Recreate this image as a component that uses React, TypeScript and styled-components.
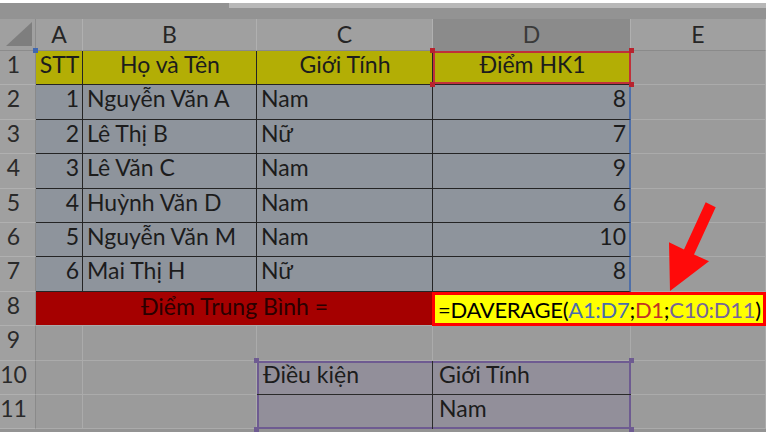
import React from "react";
import styled, { createGlobalStyle } from "styled-components";

const GlobalStyle = createGlobalStyle`
  html, body { margin: 0; padding: 0; background: #ffffff; }
  body { font-family: Lato, "Noto Sans", sans-serif; }
`;

const Page = styled.div`
  position: relative;
  width: 768px;
  height: 432px;
  box-sizing: border-box;
  padding: 3px 2px 0 0;
  background: #ffffff;
  overflow: hidden;
`;

const Window = styled.div`
  height: 100%;
  display: flex;
  flex-direction: column;
  background: #939393;
`;

const TopBand = styled.div`
  flex: none;
  height: 16px;
  display: flex;
  align-items: flex-start;
`;

const FormulaEdge = styled.div`
  margin-left: 229px;
  flex: 1;
  height: 5px;
  background: #b8b8b8;
`;

const Sheet = styled.div`
  display: grid;
  grid-template-columns: 36px 47px 174px 176px 198px 135px;
  grid-template-rows: 32px repeat(11, 34.4px);
  background: #9b9b9b;
  font-size: 23px;
  line-height: 27px;
  color: #1c1c1c;
`;

const Corner = styled.div`
  position: relative;
  background: #a0a0a0;
  border-right: 1px solid #8c8c8c;
  border-bottom: 1px solid #8c8c8c;
  box-sizing: border-box;
  &::after {
    content: "";
    position: absolute;
    right: 3px;
    bottom: 4px;
    width: 0;
    height: 0;
    border-left: 26px solid transparent;
    border-bottom: 24px solid #7e7e7e;
  }
`;

const ColHeader = styled.div<{ $selected?: boolean }>`
  display: flex;
  justify-content: center;
  align-items: flex-start;
  padding-top: 2px;
  box-sizing: border-box;
  background: ${(p) => (p.$selected ? "#8b8b8b" : "#a0a0a0")};
  border-right: 1px solid #b0b0b0;
  border-bottom: 1px solid #8a8a8a;
  color: ${(p) => (p.$selected ? "#3a3a3a" : "#262626")};
`;

const RowHeader = styled.div`
  display: flex;
  justify-content: center;
  align-items: flex-start;
  padding-right: 8px;
  box-sizing: border-box;
  background: #a0a0a0;
  border-right: 1px solid #8a8a8a;
  border-bottom: 1px solid #b0b0b0;
  color: #2a2a2a;
`;

const EmptyCell = styled.div`
  box-sizing: border-box;
  background: #9b9b9b;
  border-right: 1px solid #ababab;
  border-bottom: 1px solid #ababab;
`;

const DataTable = styled.div`
  grid-column: 2 / 6;
  grid-row: 2 / 9;
  display: grid;
  grid-template-columns: 47px 174px 176px 198px;
  grid-template-rows: repeat(7, 34.4px);
  position: relative;
  border-bottom: 1px solid #55709c;
`;

const TCell = styled.div<{ $head?: boolean; $align?: "left" | "right" | "center"; $last?: boolean }>`
  position: relative;
  display: flex;
  align-items: flex-start;
  justify-content: ${(p) =>
    p.$align === "right" ? "flex-end" : p.$align === "center" ? "center" : "flex-start"};
  padding: 0 3px 0 4px;
  box-sizing: border-box;
  white-space: nowrap;
  background: ${(p) => (p.$head ? "#b3ae05" : "#8e949c")};
  border-right: ${(p) => (p.$last ? "2px solid #4f6fa8" : "1.5px solid #242424")};
  border-bottom: 1.5px solid #242424;
`;

const SelectedCell = styled(TCell)`
  border-right: none;
  box-shadow: inset 0 0 0 2px #c0303a;
`;

const Handle = styled.span<{ $c: string; $x: "l" | "r"; $y: "t" | "b" }>`
  position: absolute;
  width: 5px;
  height: 5px;
  background: ${(p) => p.$c};
  ${(p) => (p.$x === "l" ? "left: -3px;" : "right: -3px;")}
  ${(p) => (p.$y === "t" ? "top: -3px;" : "bottom: -3px;")}
  z-index: 2;
`;

const AverageLabel = styled.div`
  grid-column: 2 / 5;
  grid-row: 9;
  display: flex;
  justify-content: center;
  align-items: flex-start;
  padding-top: 1px;
  background: #a50000;
  border-bottom: 1px solid #ababab;
  color: #2a0000;
  box-sizing: border-box;
`;

const FormulaBox = styled.div`
  grid-column: 5 / 7;
  grid-row: 9;
  display: flex;
  align-items: flex-start;
  padding: 1px 0 0 3px;
  margin-left: -1px;
  box-sizing: border-box;
  background: #ffff00;
  border: 3px solid #ff0000;
  color: #000000;
  font-size: 22px;
  letter-spacing: -0.3px;
  white-space: nowrap;
  z-index: 1;
`;

const Ref = styled.span<{ $c: string }>`
  color: ${(p) => p.$c};
`;

const Criteria = styled.div`
  grid-column: 4 / 6;
  grid-row: 11 / 13;
  position: relative;
  display: grid;
  grid-template-columns: 176px 198px;
  grid-template-rows: 34.4px 34.4px;
  background: #928f9a;
  box-shadow: inset 0 0 0 2px #6e5b91;
`;

const CCell = styled.div<{ $right?: boolean; $top?: boolean }>`
  display: flex;
  align-items: flex-start;
  padding: 0 4px 0 6px;
  box-sizing: border-box;
  border-right: ${(p) => (p.$right ? "1.5px solid #2a2a2a" : "none")};
  border-bottom: ${(p) => (p.$top ? "1.5px solid #2a2a2a" : "none")};
`;

const ArrowLayer = styled.svg`
  position: absolute;
  left: 0;
  top: 0;
  pointer-events: none;
`;

const students = [
  ["1", "Nguyễn Văn A", "Nam", "8"],
  ["2", "Lê Thị B", "Nữ", "7"],
  ["3", "Lê Văn C", "Nam", "9"],
  ["4", "Huỳnh Văn D", "Nam", "6"],
  ["5", "Nguyễn Văn M", "Nam", "10"],
  ["6", "Mai Thị H", "Nữ", "8"],
];

export default function App() {
  return (
    <>
      <GlobalStyle />
      <Page>
        <Window>
          <TopBand>
            <FormulaEdge />
          </TopBand>
          <Sheet>
            <Corner />
            <ColHeader>A</ColHeader>
            <ColHeader>B</ColHeader>
            <ColHeader>C</ColHeader>
            <ColHeader $selected>D</ColHeader>
            <ColHeader>E</ColHeader>

            {Array.from({ length: 11 }, (_, i) => (
              <RowHeader key={"rh" + i} style={{ gridColumn: 1, gridRow: i + 2 }}>
                {i + 1}
              </RowHeader>
            ))}

            <DataTable>
              <TCell $head $align="center">
                STT
                <Handle $c="#3f67b0" $x="l" $y="t" />
              </TCell>
              <TCell $head $align="center">Họ và Tên</TCell>
              <TCell $head $align="center">Giới Tính</TCell>
              <SelectedCell $head $align="center">
                Điểm HK1
                <Handle $c="#b8232e" $x="l" $y="t" />
                <Handle $c="#b8232e" $x="r" $y="t" />
                <Handle $c="#b8232e" $x="l" $y="b" />
                <Handle $c="#b8232e" $x="r" $y="b" />
              </SelectedCell>
              {students.map((s) => (
                <React.Fragment key={s[0]}>
                  <TCell $align="right">{s[0]}</TCell>
                  <TCell>{s[1]}</TCell>
                  <TCell>{s[2]}</TCell>
                  <TCell $align="right" $last>
                    {s[3]}
                  </TCell>
                </React.Fragment>
              ))}
            </DataTable>

            {Array.from({ length: 7 }, (_, i) => (
              <EmptyCell key={"e" + i} style={{ gridColumn: 6, gridRow: i + 2 }} />
            ))}

            <AverageLabel>Điểm Trung Bình =</AverageLabel>
            <FormulaBox>
              =DAVERAGE(<Ref $c="#4a6cae">A1:D7</Ref>;<Ref $c="#c23326">D1</Ref>;<Ref $c="#76659a">C10:D11</Ref>)
            </FormulaBox>

            {[2, 3, 4, 5, 6].map((c) => (
              <EmptyCell key={"r9" + c} style={{ gridColumn: c, gridRow: 10 }} />
            ))}
            {[11, 12].map((r) =>
              [2, 3, 6].map((c) => (
                <EmptyCell key={"r" + r + c} style={{ gridColumn: c, gridRow: r }} />
              ))
            )}

            <Criteria>
              <CCell $right $top>Điều kiện</CCell>
              <CCell $top>Giới Tính</CCell>
              <CCell $right />
              <CCell>Nam</CCell>
              <Handle $c="#6e5b91" $x="l" $y="t" />
              <Handle $c="#6e5b91" $x="r" $y="t" />
              <Handle $c="#6e5b91" $x="l" $y="b" />
              <Handle $c="#6e5b91" $x="r" $y="b" />
            </Criteria>
          </Sheet>
        </Window>
        <ArrowLayer width="768" height="432" viewBox="0 0 768 432">
          <polygon
            points="705.7,202.3 715.7,207.3 694,254.4 709,261.3 670,291 669,242.3 684,249.6"
            fill="#ff0a0a"
          />
        </ArrowLayer>
      </Page>
    </>
  );
}
